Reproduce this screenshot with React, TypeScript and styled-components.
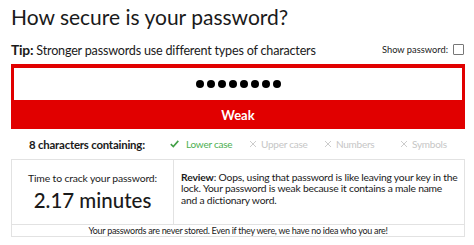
import styled, { createGlobalStyle } from "styled-components";

const GlobalStyle = createGlobalStyle`
  body {
    margin: 0;
    background: #ffffff;
    font-family: Lato, "Liberation Sans", sans-serif;
    color: #1a1a1a;
  }
`;

const Page = styled.div`
  width: 454px;
  padding: 0 9px 0 11px;
`;

const Title = styled.h1`
  margin: 0;
  padding-top: 4px;
  height: 31px;
  font-size: 21px;
  font-weight: 400;
  line-height: 26px;
`;

const TipRow = styled.div`
  display: flex;
  justify-content: space-between;
  align-items: center;
  height: 29px;
`;

const Tip = styled.div`
  font-size: 12.6px;
  letter-spacing: -0.2px;
  b {
    font-size: 13.8px;
    font-weight: 700;
  }
`;

const ShowLabel = styled.label`
  display: flex;
  align-items: center;
  gap: 5px;
  font-size: 9.3px;
  margin-right: 1px;
`;

const Checkbox = styled.span`
  width: 9px;
  height: 9px;
  border: 1px solid #777;
  border-radius: 1px;
  background: #fff;
`;

const Meter = styled.div<{ $color: string }>`
  background: ${(p) => p.$color};
  padding: 4px 3px 0 3px;
  height: 65px;
  box-sizing: border-box;
  display: flex;
  flex-direction: column;
`;

const Input = styled.div`
  background: #fff;
  height: 32px;
  display: flex;
  align-items: center;
  justify-content: center;
  gap: 3px;
`;

const Dot = styled.span`
  width: 8px;
  height: 8px;
  border-radius: 50%;
  background: #000;
`;

const Strength = styled.div`
  flex: 1;
  display: flex;
  align-items: center;
  justify-content: center;
  color: #fff;
  font-weight: 700;
  font-size: 13px;
`;

const CriteriaRow = styled.div`
  display: flex;
  align-items: center;
  height: 30px;
  padding-left: 18px;
`;

const CriteriaLabel = styled.div`
  font-weight: 700;
  font-size: 11.4px;
  letter-spacing: -0.2px;
  width: 141px;
`;

const Criterion = styled.div<{ $ok?: boolean; $w: number }>`
  display: flex;
  align-items: center;
  gap: ${(p) => (p.$ok ? 7 : 4)}px;
  width: ${(p) => p.$w}px;
  font-size: 10px;
  letter-spacing: -0.25px;
  color: ${(p) => (p.$ok ? "#4caf50" : "#c6c6c6")};
`;

const Table = styled.div`
  border: 1px solid #e2e2e2;
`;

const Cells = styled.div`
  display: grid;
  grid-template-columns: 162px 1fr;
  height: 64px;
  border-bottom: 1px solid #e2e2e2;
`;

const TimeCell = styled.div`
  border-right: 1px solid #e2e2e2;
  display: flex;
  flex-direction: column;
  align-items: center;
  padding-top: 12px;
`;

const TimeLabel = styled.div`
  font-size: 10.4px;
  letter-spacing: -0.15px;
  line-height: 13px;
`;

const TimeValue = styled.div`
  font-size: 20.5px;
  line-height: 30px;
  font-weight: 500;
`;

const Review = styled.div`
  font-size: 10.3px;
  letter-spacing: -0.2px;
  line-height: 11.3px;
  padding: 12px 3px 0 7px;
  white-space: nowrap;
`;

const ReviewLabel = styled.strong`
  font-weight: 700;
  letter-spacing: -0.1px;
`;

const Footer = styled.div`
  font-size: 9px;
  letter-spacing: -0.28px;
  text-align: center;
  height: 11px;
  line-height: 11px;
`;

const Check = () => (
  <svg width="9" height="8" viewBox="0 0 9 8">
    <path d="M0.8 4.2 L3.3 6.6 L8.3 0.9" fill="none" stroke="#43a047" strokeWidth="1.6" />
  </svg>
);

const Cross = () => (
  <svg width="8" height="8" viewBox="0 0 8 8">
    <path d="M1 1 L7 7 M7 1 L1 7" fill="none" stroke="#c6c6c6" strokeWidth="0.9" />
  </svg>
);

export default function App() {
  return (
    <>
      <GlobalStyle />
      <Page>
        <Title>How secure is your password?</Title>
        <TipRow>
          <Tip>
            <b>Tip:</b> Stronger passwords use different types of characters
          </Tip>
          <ShowLabel>
            Show password: <Checkbox />
          </ShowLabel>
        </TipRow>
        <Meter $color="#e10000">
          <Input>
            {Array.from({ length: 8 }).map((_, i) => (
              <Dot key={i} />
            ))}
          </Input>
          <Strength>Weak</Strength>
        </Meter>
        <CriteriaRow>
          <CriteriaLabel>8 characters containing:</CriteriaLabel>
          <Criterion $ok $w={79}>
            <Check /> Lower case
          </Criterion>
          <Criterion $w={75}>
            <Cross /> Upper case
          </Criterion>
          <Criterion $w={76}>
            <Cross /> Numbers
          </Criterion>
          <Criterion $w={60}>
            <Cross /> Symbols
          </Criterion>
        </CriteriaRow>
        <Table>
          <Cells>
            <TimeCell>
              <TimeLabel>Time to crack your password:</TimeLabel>
              <TimeValue>2.17 minutes</TimeValue>
            </TimeCell>
            <Review>
              <ReviewLabel>Review</ReviewLabel>: Oops, using that password is like leaving your key
              in the
              <br />
              lock. Your password is weak because it contains a male name
              <br />
              and a dictionary word.
            </Review>
          </Cells>
          <Footer>Your passwords are never stored. Even if they were, we have no idea who you are!</Footer>
        </Table>
      </Page>
    </>
  );
}
